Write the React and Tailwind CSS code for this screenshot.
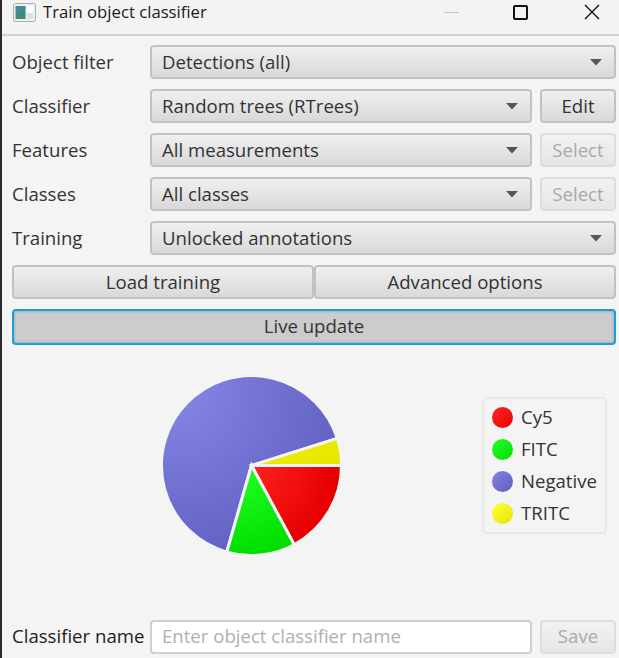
const font = { fontFamily: '"Open Sans", "Noto Sans", sans-serif' }

const btn =
  'h-[34px] flex items-center justify-center rounded-[4px] border-2 border-[#c2c2c2] bg-gradient-to-b from-[#f0f0f0] to-[#d9d9d9] text-[#333333] text-[18.6px] leading-none'
const btnOff =
  'h-[34px] w-[76px] flex items-center justify-center rounded-[4px] border-2 border-[#dddddd] bg-gradient-to-b from-[#f2f2f2] to-[#e6e6e6] text-[#a9a9a9] text-[18.6px] leading-none'

function Caret() {
  return (
    <svg width="12" height="7" viewBox="0 0 12 7" className="shrink-0">
      <path d="M0 0H12L6 6.5Z" fill="#555555" />
    </svg>
  )
}

function Select({ value }) {
  return (
    <div className={btn + ' flex-1 !justify-between pl-[10px] pr-[12px]'}>
      <span>{value}</span>
      <Caret />
    </div>
  )
}

function Row({ label, value, action, disabled }) {
  return (
    <div className="flex items-center h-[34px]">
      <span className="w-[138px] text-[18.6px] text-[#333333] leading-none">{label}</span>
      <Select value={value} />
      {action && (
        <div className={(disabled ? btnOff : btn + ' w-[76px]') + ' ml-2'}>{action}</div>
      )}
    </div>
  )
}

function Pie() {
  return (
    <svg width="184" height="184" viewBox="-2.5 -2.5 184 184" className="shrink-0">
      <defs>
        <radialGradient id="neg" gradientUnits="userSpaceOnUse" cx="20" cy="20" r="190">
          <stop offset="0" stopColor="#8585e5" />
          <stop offset="1" stopColor="#5c5cbd" />
        </radialGradient>
        <radialGradient id="red" gradientUnits="userSpaceOnUse" cx="90" cy="90" r="85">
          <stop offset="0" stopColor="#ff2222" />
          <stop offset="1" stopColor="#e60000" />
        </radialGradient>
        <radialGradient id="green" gradientUnits="userSpaceOnUse" cx="80" cy="95" r="85">
          <stop offset="0" stopColor="#22ff22" />
          <stop offset="1" stopColor="#00dd00" />
        </radialGradient>
        <linearGradient id="yellow" x1="0" y1="0" x2="1" y2="1">
          <stop offset="0" stopColor="#f2f200" />
          <stop offset="1" stopColor="#e4e400" />
        </linearGradient>
      </defs>
      <g stroke="#f4f4f4" strokeWidth="3" strokeLinejoin="miter">
        <path d="M90 90L175.8 62.9A90 90 0 1 0 65.3 176.6Z" fill="url(#neg)" />
        <path d="M90 90L180 90A90 90 0 0 0 175.8 62.9Z" fill="url(#yellow)" />
        <path d="M90 90L132.7 169.2A90 90 0 0 0 180 90Z" fill="url(#red)" />
        <path d="M90 90L65.3 176.6A90 90 0 0 0 132.7 169.2Z" fill="url(#green)" />
      </g>
    </svg>
  )
}

function LegendItem({ from, to, label }) {
  return (
    <div className="flex items-center h-[32px] gap-[8px]">
      <span className={'w-[21px] h-[21px] rounded-full bg-gradient-to-br ' + from + ' ' + to} />
      <span className="text-[18.6px] text-[#333333] leading-none">{label}</span>
    </div>
  )
}

export default function App() {
  return (
    <div className="w-[619px] h-[658px] flex flex-col border-l-2 border-[#2b2b2b] bg-[#f4f4f4] overflow-hidden" style={font}>
      <div className="h-[36px] flex items-center pb-[10px] bg-[#f3f3f3] border-b-2 border-[#d2d2d2] shrink-0">
        <svg width="24" height="19" viewBox="0 0 24 19" className="ml-[11px] shrink-0">
          <defs>
            <linearGradient id="appIcon" x1="0" y1="0" x2="1" y2="1">
              <stop offset="0" stopColor="#4a8aa8" />
              <stop offset="1" stopColor="#3a8f5f" />
            </linearGradient>
          </defs>
          <rect x="0.5" y="0.5" width="22" height="18" rx="2" fill="#eef0f0" stroke="#a9aeae" />
          <rect x="2.5" y="3" width="10" height="13" fill="url(#appIcon)" />
          <rect x="14" y="3" width="6" height="7" fill="#ffffff" />
          <rect x="14" y="10" width="6" height="6" fill="#dde3e0" />
        </svg>
        <span className="ml-[6px] text-[16.7px] text-[#1a1a1a] leading-none">Train object classifier</span>
        <div className="ml-auto flex items-center">
          <span className="w-[15px] h-px bg-[#c4c4c4]" />
          <span className="ml-[54px] w-[15px] h-[15px] rounded-[2px] border-2 border-[#111111]" />
          <svg width="16" height="16" viewBox="0 0 16 16" className="ml-[56px] mr-[19px]">
            <path d="M1 1L15 15M15 1L1 15" stroke="#111111" strokeWidth="1.4" />
          </svg>
        </div>
      </div>

      <div className="flex-1 flex flex-col pl-[10px] pr-[3px] pt-[9px]">
        <div className="flex flex-col gap-[10px]">
          <Row label="Object filter" value="Detections (all)" />
          <Row label="Classifier" value="Random trees (RTrees)" action="Edit" />
          <Row label="Features" value="All measurements" action="Select" disabled />
          <Row label="Classes" value="All classes" action="Select" disabled />
          <Row label="Training" value="Unlocked annotations" />
          <div className="flex">
            <div className={btn + ' flex-1'}>Load training</div>
            <div className={btn + ' flex-1'}>Advanced options</div>
          </div>
          <div className="h-[36px] flex items-center justify-center pb-[2px] rounded-[4px] border-2 border-[#1ba1d8] bg-[#cccccc] shadow-[inset_0_0_3px_#7a9aa8] text-[#333333] text-[18.6px] leading-none">
            Live update
          </div>
        </div>

        <div className="flex-1 flex items-start pl-[147px] pt-[28px]">
          <Pie />
          <div className="ml-[139px] mt-[24px] w-[125px] h-[137px] shrink-0 rounded-[5px] border-2 border-[#e8e8e8] pl-[8px] pt-[2px]">
            <LegendItem from="from-[#ff2222]" to="to-[#e60000]" label="Cy5" />
            <LegendItem from="from-[#22ff22]" to="to-[#00dd00]" label="FITC" />
            <LegendItem from="from-[#8585e5]" to="to-[#5c5cbd]" label="Negative" />
            <LegendItem from="from-[#ffff33]" to="to-[#e4e400]" label="TRITC" />
          </div>
        </div>

        <div className="flex items-center h-[34px] mb-[4px]">
          <span className="w-[138px] text-[18.6px] text-[#222222] leading-none pb-[2px]">Classifier name</span>
          <div className="flex-1 h-[34px] flex items-center rounded-[4px] border-2 border-[#cfcfcf] bg-white pl-[10px] pb-[2px] text-[18.6px] text-[#b0b0b0] leading-none">
            Enter object classifier name
          </div>
          <div className={btnOff + ' ml-2 pb-[2px]'}>Save</div>
        </div>
      </div>
    </div>
  )
}
